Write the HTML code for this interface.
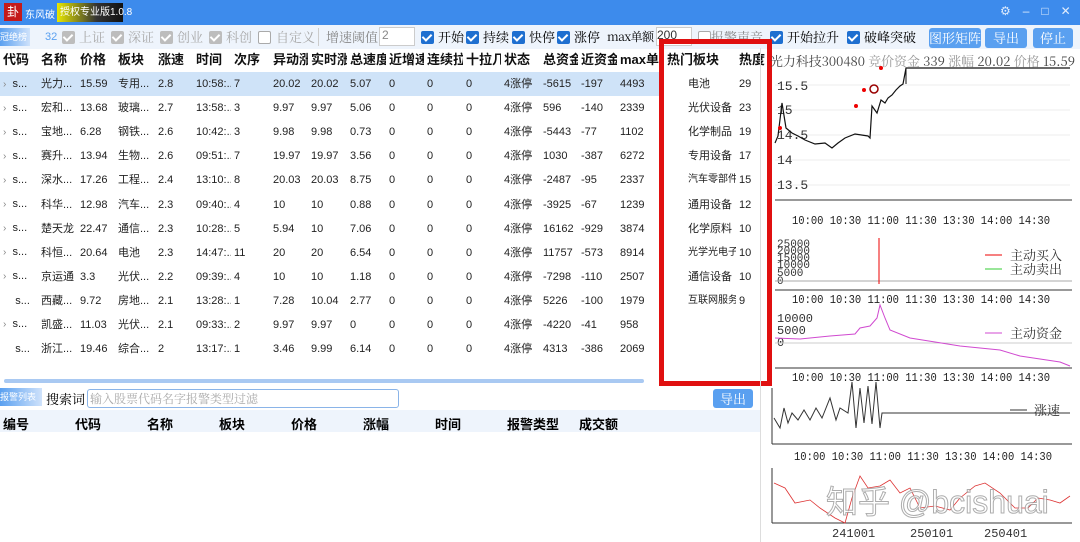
<!DOCTYPE html><html><head><meta charset="utf-8"><style>
*{margin:0;padding:0;box-sizing:border-box}
body{width:1080px;height:542px;overflow:hidden;background:#fff;font-family:"Liberation Sans","Noto Sans CJK SC",sans-serif;position:relative}
.a{position:absolute;white-space:nowrap}
#title{left:0;top:0;width:1080px;height:25px;background:#3d8bec}
#tb{left:0;top:25px;width:1080px;height:24px;background:#eef4fc}
.tbt{font-family:"Noto Serif CJK SC","Liberation Serif",serif;font-size:13px;line-height:18px}
.cb{width:13px;height:13px;border-radius:2px}
.on{background:#1e6fd0}
.on::after{content:"";position:absolute;left:3px;top:1px;width:4px;height:7px;border:solid #fff;border-width:0 2px 2px 0;transform:rotate(45deg)}
.gr{background:#bdbdbd}
.gr::after{content:"";position:absolute;left:3px;top:1px;width:4px;height:7px;border:solid #fff;border-width:0 2px 2px 0;transform:rotate(45deg)}
.off{border:1px solid #aaa;background:#fff}
.btn{background:#5aa0f0;color:#fff;font-size:13px;border-radius:3px;height:20px;text-align:center;line-height:20px;font-family:"Noto Serif CJK SC",serif}
table{border-collapse:collapse;table-layout:fixed;position:absolute}
tr{height:24.1px}
td,th{font-size:11px;white-space:nowrap;overflow:hidden;padding:0 0 0 3px;text-align:left;color:#222;vertical-align:middle;line-height:16px}
th{font-size:13px;font-weight:bold;color:#111}
tr.h{height:24px}
.ar{color:#888;font-size:10px}
</style></head><body>
<div class="a" id="title"></div>
<div class="a" style="left:4px;top:3px;width:18px;height:18px;background:#c41a1a;color:#fff;font-size:12px;text-align:center;line-height:18px">卦</div>
<div class="a" style="left:25px;top:6px;color:#fff;font-size:10px">东风破</div>
<div class="a" style="left:57px;top:3px;width:66px;height:19px;background:linear-gradient(90deg,#e8e800,#333 60%,#111);color:#fff;font-size:10px;line-height:19px;padding-left:3px">授权专业版1.0.8</div>
<div class="a" style="left:1000px;top:4px;color:#e0ecfc;font-size:12px;letter-spacing:12px">⚙–□✕</div>
<div class="a" id="tb"></div>
<div class="a" style="left:0;top:28px;width:30px;height:18px;background:linear-gradient(90deg,#5aa0f0,#cfe2fb);color:#fff;font-size:9px;line-height:18px">冠绝榜</div>
<div class="a" style="left:45px;top:31px;color:#5aa0f0;font-size:11px">32</div>
<div class="a cb gr" style="left:62px;top:31px"></div><div class="a tbt" style="left:79px;top:28px;color:#aaa">上证</div>
<div class="a cb gr" style="left:111px;top:31px"></div><div class="a tbt" style="left:128px;top:28px;color:#aaa">深证</div>
<div class="a cb gr" style="left:160px;top:31px"></div><div class="a tbt" style="left:177px;top:28px;color:#aaa">创业</div>
<div class="a cb gr" style="left:209px;top:31px"></div><div class="a tbt" style="left:226px;top:28px;color:#aaa">科创</div>
<div class="a cb off" style="left:258px;top:31px"></div><div class="a tbt" style="left:276px;top:28px;color:#aaa">自定义</div>
<div class="a" style="left:318px;top:28px;width:1px;height:18px;background:#ccc"></div>
<div class="a tbt" style="left:326px;top:28px;color:#888">增速阈值</div>
<div class="a" style="left:379px;top:27px;width:36px;height:19px;border:1px solid #ccc;background:#fff;font-size:12px;color:#888;padding-left:2px">2</div>
<div class="a cb on" style="left:421px;top:31px"></div><div class="a tbt" style="left:438px;top:28px">开始</div>
<div class="a cb on" style="left:466px;top:31px"></div><div class="a tbt" style="left:483px;top:28px">持续</div>
<div class="a cb on" style="left:512px;top:31px"></div><div class="a tbt" style="left:529px;top:28px">快停</div>
<div class="a cb on" style="left:557px;top:31px"></div><div class="a tbt" style="left:574px;top:28px">涨停</div>
<div class="a tbt" style="left:607px;top:28px;font-size:12px;letter-spacing:-0.5px">max单额</div>
<div class="a" style="left:656px;top:27px;width:36px;height:19px;border:1px solid #ccc;background:#fff;font-size:12px;color:#333">200</div>
<div class="a cb off" style="left:698px;top:31px"></div><div class="a tbt" style="left:711px;top:28px;color:#888">报警声音</div>
<div class="a cb on" style="left:770px;top:31px"></div><div class="a tbt" style="left:787px;top:28px">开始拉升</div>
<div class="a cb on" style="left:847px;top:31px"></div><div class="a tbt" style="left:864px;top:28px">破峰突破</div>
<div class="a btn" style="left:929px;top:28px;width:52px">图形矩阵</div>
<div class="a btn" style="left:985px;top:28px;width:42px">导出</div>
<div class="a btn" style="left:1033px;top:28px;width:40px">停止</div>

<div class="a" style="left:0;top:72px;width:659px;height:24px;background:#cfe3f8"></div>
<table style="left:0;top:48px;width:659px">
<colgroup><col style="width:38px"><col style="width:39px"><col style="width:38px"><col style="width:40px"><col style="width:38px"><col style="width:38px"><col style="width:39px"><col style="width:38px"><col style="width:39px"><col style="width:39px"><col style="width:38px"><col style="width:39px"><col style="width:38px"><col style="width:39px"><col style="width:38px"><col style="width:39px"><col style="width:42px"></colgroup>
<tr class="h"><th>代码</th><th>名称</th><th>价格</th><th>板块</th><th>涨速</th><th>时间</th><th>次序</th><th>异动涨</th><th>实时涨</th><th>总速度</th><th>近增速</th><th>连续拉</th><th>十拉几</th><th>状态</th><th>总资金</th><th>近资金</th><th>max单</th></tr>
<tr><td><span class="ar">›</span>&nbsp; s...</td><td>光力...</td><td>15.59</td><td>专用...</td><td>2.8</td><td>10:58:...</td><td>7</td><td>20.02</td><td>20.02</td><td>5.07</td><td>0</td><td>0</td><td>0</td><td>4涨停</td><td>-5615</td><td>-197</td><td>4493</td></tr>
<tr><td><span class="ar">›</span>&nbsp; s...</td><td>宏和...</td><td>13.68</td><td>玻璃...</td><td>2.7</td><td>13:58:...</td><td>3</td><td>9.97</td><td>9.97</td><td>5.06</td><td>0</td><td>0</td><td>0</td><td>4涨停</td><td>596</td><td>-140</td><td>2339</td></tr>
<tr><td><span class="ar">›</span>&nbsp; s...</td><td>宝地...</td><td>6.28</td><td>钢铁...</td><td>2.6</td><td>10:42:...</td><td>3</td><td>9.98</td><td>9.98</td><td>0.73</td><td>0</td><td>0</td><td>0</td><td>4涨停</td><td>-5443</td><td>-77</td><td>1102</td></tr>
<tr><td><span class="ar">›</span>&nbsp; s...</td><td>赛升...</td><td>13.94</td><td>生物...</td><td>2.6</td><td>09:51:...</td><td>7</td><td>19.97</td><td>19.97</td><td>3.56</td><td>0</td><td>0</td><td>0</td><td>4涨停</td><td>1030</td><td>-387</td><td>6272</td></tr>
<tr><td><span class="ar">›</span>&nbsp; s...</td><td>深水...</td><td>17.26</td><td>工程...</td><td>2.4</td><td>13:10:...</td><td>8</td><td>20.03</td><td>20.03</td><td>8.75</td><td>0</td><td>0</td><td>0</td><td>4涨停</td><td>-2487</td><td>-95</td><td>2337</td></tr>
<tr><td><span class="ar">›</span>&nbsp; s...</td><td>科华...</td><td>12.98</td><td>汽车...</td><td>2.3</td><td>09:40:...</td><td>4</td><td>10</td><td>10</td><td>0.88</td><td>0</td><td>0</td><td>0</td><td>4涨停</td><td>-3925</td><td>-67</td><td>1239</td></tr>
<tr><td><span class="ar">›</span>&nbsp; s...</td><td>楚天龙</td><td>22.47</td><td>通信...</td><td>2.3</td><td>10:28:...</td><td>5</td><td>5.94</td><td>10</td><td>7.06</td><td>0</td><td>0</td><td>0</td><td>4涨停</td><td>16162</td><td>-929</td><td>3874</td></tr>
<tr><td><span class="ar">›</span>&nbsp; s...</td><td>科恒...</td><td>20.64</td><td>电池</td><td>2.3</td><td>14:47:...</td><td>11</td><td>20</td><td>20</td><td>6.54</td><td>0</td><td>0</td><td>0</td><td>4涨停</td><td>11757</td><td>-573</td><td>8914</td></tr>
<tr><td><span class="ar">›</span>&nbsp; s...</td><td>京运通</td><td>3.3</td><td>光伏...</td><td>2.2</td><td>09:39:...</td><td>4</td><td>10</td><td>10</td><td>1.18</td><td>0</td><td>0</td><td>0</td><td>4涨停</td><td>-7298</td><td>-110</td><td>2507</td></tr>
<tr><td>&nbsp;&nbsp;&nbsp; s...</td><td>西藏...</td><td>9.72</td><td>房地...</td><td>2.1</td><td>13:28:...</td><td>1</td><td>7.28</td><td>10.04</td><td>2.77</td><td>0</td><td>0</td><td>0</td><td>4涨停</td><td>5226</td><td>-100</td><td>1979</td></tr>
<tr><td><span class="ar">›</span>&nbsp; s...</td><td>凯盛...</td><td>11.03</td><td>光伏...</td><td>2.1</td><td>09:33:...</td><td>2</td><td>9.97</td><td>9.97</td><td>0</td><td>0</td><td>0</td><td>0</td><td>4涨停</td><td>-4220</td><td>-41</td><td>958</td></tr>
<tr><td>&nbsp;&nbsp;&nbsp; s...</td><td>浙江...</td><td>19.46</td><td>综合...</td><td>2</td><td>13:17:...</td><td>1</td><td>3.46</td><td>9.99</td><td>6.14</td><td>0</td><td>0</td><td>0</td><td>4涨停</td><td>4313</td><td>-386</td><td>2069</td></tr>
</table>
<div class="a" style="left:4px;top:379px;width:640px;height:4px;border-radius:2px;background:#a9c9f2"></div>

<table style="left:664px;top:48px;width:104px">
<colgroup><col style="width:72px"><col style="width:32px"></colgroup>
<tr class="h"><th>热门板块</th><th>热度</th></tr>
<tr><td style="padding-left:24px">电池</td><td>29</td></tr>
<tr><td style="padding-left:24px">光伏设备</td><td>23</td></tr>
<tr><td style="padding-left:24px">化学制品</td><td>19</td></tr>
<tr><td style="padding-left:24px">专用设备</td><td>17</td></tr>
<tr><td style="padding-left:24px;font-size:10px">汽车零部件</td><td>15</td></tr>
<tr><td style="padding-left:24px">通用设备</td><td>12</td></tr>
<tr><td style="padding-left:24px">化学原料</td><td>10</td></tr>
<tr><td style="padding-left:24px;font-size:10px">光学光电子</td><td>10</td></tr>
<tr><td style="padding-left:24px">通信设备</td><td>10</td></tr>
<tr><td style="padding-left:24px;font-size:10px">互联网服务</td><td>9</td></tr>
</table>
<div class="a" style="left:659px;top:39px;width:113px;height:347px;border:5px solid #e01010"></div>

<div class="a" style="left:0;top:388px;width:42px;height:18px;background:linear-gradient(90deg,#5aa0f0,#cfe2fb);color:#fff;font-size:9px;line-height:18px">报警列表</div>
<div class="a" style="left:46px;top:389px;font-size:13px;font-family:'Noto Serif CJK SC',serif">搜索词</div>
<div class="a" style="left:87px;top:389px;width:312px;height:19px;border:1px solid #8ab4e8;border-radius:3px;font-size:12px;color:#aaa;padding-left:2px;font-family:'Noto Serif CJK SC',serif">输入股票代码名字报警类型过滤</div>
<div class="a btn" style="left:713px;top:389px;width:40px;height:19px;background:#5aa0f0">导出</div>
<div class="a" style="left:0;top:410px;width:760px;height:22px;background:#eef4fc"></div>
<div class="a" style="top:414px;left:3px;font-size:13px;font-weight:bold">编号</div>
<div class="a" style="top:414px;left:75px;font-size:13px;font-weight:bold">代码</div>
<div class="a" style="top:414px;left:147px;font-size:13px;font-weight:bold">名称</div>
<div class="a" style="top:414px;left:219px;font-size:13px;font-weight:bold">板块</div>
<div class="a" style="top:414px;left:291px;font-size:13px;font-weight:bold">价格</div>
<div class="a" style="top:414px;left:363px;font-size:13px;font-weight:bold">涨幅</div>
<div class="a" style="top:414px;left:435px;font-size:13px;font-weight:bold">时间</div>
<div class="a" style="top:414px;left:507px;font-size:13px;font-weight:bold">报警类型</div>
<div class="a" style="top:414px;left:579px;font-size:13px;font-weight:bold">成交额</div>
<div class="a" style="left:760px;top:48px;width:1px;height:494px;background:#ddd"></div>

<svg class="a" style="left:760px;top:48px" width="320" height="494" font-family="Liberation Mono,Noto Serif CJK SC,monospace" font-size="13">
<text x="10" y="18" fill="#444" font-family="Noto Serif CJK SC,serif" textLength="305" lengthAdjust="spacingAndGlyphs">光力科技300480 <tspan fill="#999">竞价资金</tspan> 339 <tspan fill="#999">涨幅</tspan> 20.02 <tspan fill="#999">价格</tspan> 15.59</text>
<g stroke="#eee"><line x1="15" y1="37" x2="310" y2="37"/><line x1="15" y1="62" x2="310" y2="62"/><line x1="15" y1="87" x2="310" y2="87"/><line x1="15" y1="112" x2="310" y2="112"/><line x1="15" y1="137" x2="310" y2="137"/></g>
<line x1="15" y1="152" x2="312" y2="152" stroke="#333"/>
<g fill="#333" font-size="13"><text x="17" y="42">15.5</text><text x="17" y="66">15</text><text x="17" y="91">14.5</text><text x="17" y="116">14</text><text x="17" y="141">13.5</text></g>
<polyline fill="none" stroke="#111" stroke-width="1.2" points="15,95 18,88 22,55 26,80 32,85 38,88 45,92 55,96 65,95 72,100 78,95 85,90 95,86 108,88 110,90 112,58 117,65 121,52 125,55 128,50 132,47 136,42 140,38 143,36 146,20 310,20"/>
<line x1="146" y1="20" x2="146" y2="36" stroke="#111"/>
<circle cx="114" cy="41" r="4" fill="none" stroke="#900" stroke-width="1.5"/>
<g fill="#e00"><circle cx="96" cy="58" r="2"/><circle cx="104" cy="42" r="2"/><circle cx="121" cy="20" r="2"/><circle cx="20" cy="80" r="2"/></g>
<g fill="#222" font-size="12"><text x="32" y="176" textLength="258" lengthAdjust="spacingAndGlyphs">10:00 10:30 11:00 11:30 13:30 14:00 14:30</text>
<text x="32" y="255" textLength="258" lengthAdjust="spacingAndGlyphs">10:00 10:30 11:00 11:30 13:30 14:00 14:30</text>
<text x="32" y="333" textLength="258" lengthAdjust="spacingAndGlyphs">10:00 10:30 11:00 11:30 13:30 14:00 14:30</text>
<text x="34" y="412" textLength="258" lengthAdjust="spacingAndGlyphs">10:00 10:30 11:00 11:30 13:30 14:00 14:30</text></g>
<g font-size="11" fill="#333"><text x="17" y="199">25000</text><text x="17" y="206">20000</text><text x="17" y="213">15000</text><text x="17" y="220">10000</text><text x="17" y="228">5000</text><text x="17" y="236">0</text></g>
<line x1="15" y1="233" x2="312" y2="233" stroke="#aaa"/>
<line x1="119" y1="190" x2="119" y2="236" stroke="#e00"/>
<line x1="15" y1="242" x2="312" y2="242" stroke="#333"/>
<line x1="225" y1="207" x2="242" y2="207" stroke="#e00"/><text x="250" y="212" fill="#333" font-family="Noto Serif CJK SC,serif">主动买入</text>
<line x1="225" y1="221" x2="242" y2="221" stroke="#3c3"/><text x="250" y="226" fill="#333" font-family="Noto Serif CJK SC,serif">主动卖出</text>
<g font-size="12" fill="#333"><text x="17" y="274">10000</text><text x="17" y="286">5000</text><text x="17" y="298">0</text></g>
<line x1="15" y1="295" x2="312" y2="295" stroke="#ccc"/>
<polyline fill="none" stroke="#d04ad0" points="15,290 40,291 70,288 95,286 100,280 110,278 117,270 120,257 125,270 130,282 150,290 200,298 240,302 260,308 300,314 310,318"/>
<line x1="15" y1="320" x2="312" y2="320" stroke="#333"/>
<line x1="225" y1="285" x2="242" y2="285" stroke="#d04ad0"/><text x="250" y="290" fill="#333" font-family="Noto Serif CJK SC,serif">主动资金</text>
<line x1="12" y1="340" x2="12" y2="396" stroke="#333"/><line x1="12" y1="396" x2="312" y2="396" stroke="#333"/>
<polyline fill="none" stroke="#333" points="14,370 20,380 24,360 28,375 32,365 38,372 44,362 50,372 56,360 62,370 70,350 76,372 80,360 88,365 92,334 96,380 100,340 104,375 108,338 112,376 116,334 120,380 122,365 310,365"/>
<line x1="250" y1="362" x2="267" y2="362" stroke="#333"/><text x="274" y="367" fill="#333" font-family="Noto Serif CJK SC,serif">涨速</text>
<line x1="12" y1="420" x2="12" y2="475" stroke="#333"/><line x1="12" y1="475" x2="312" y2="475" stroke="#333"/>
<polyline fill="none" stroke="#d33" stroke-width="0.8" points="14,435 25,440 35,455 50,452 60,460 75,470 85,475 92,450 100,428 108,440 120,438 130,432 140,445 150,440 160,460 175,458 190,462 200,450 215,438 225,435 240,445 255,460 268,460 278,450 290,452 300,455 310,448"/>
<g font-size="12" fill="#333"><text x="72" y="489">241001</text><text x="150" y="489">250101</text><text x="224" y="489">250401</text></g>
<text x="66" y="465" fill="#fff" stroke="#999" stroke-width="1" font-size="32" font-family="Liberation Sans,Noto Sans CJK SC,sans-serif" opacity="0.8">知乎 @bcishuai</text>
</svg>
</body></html>
